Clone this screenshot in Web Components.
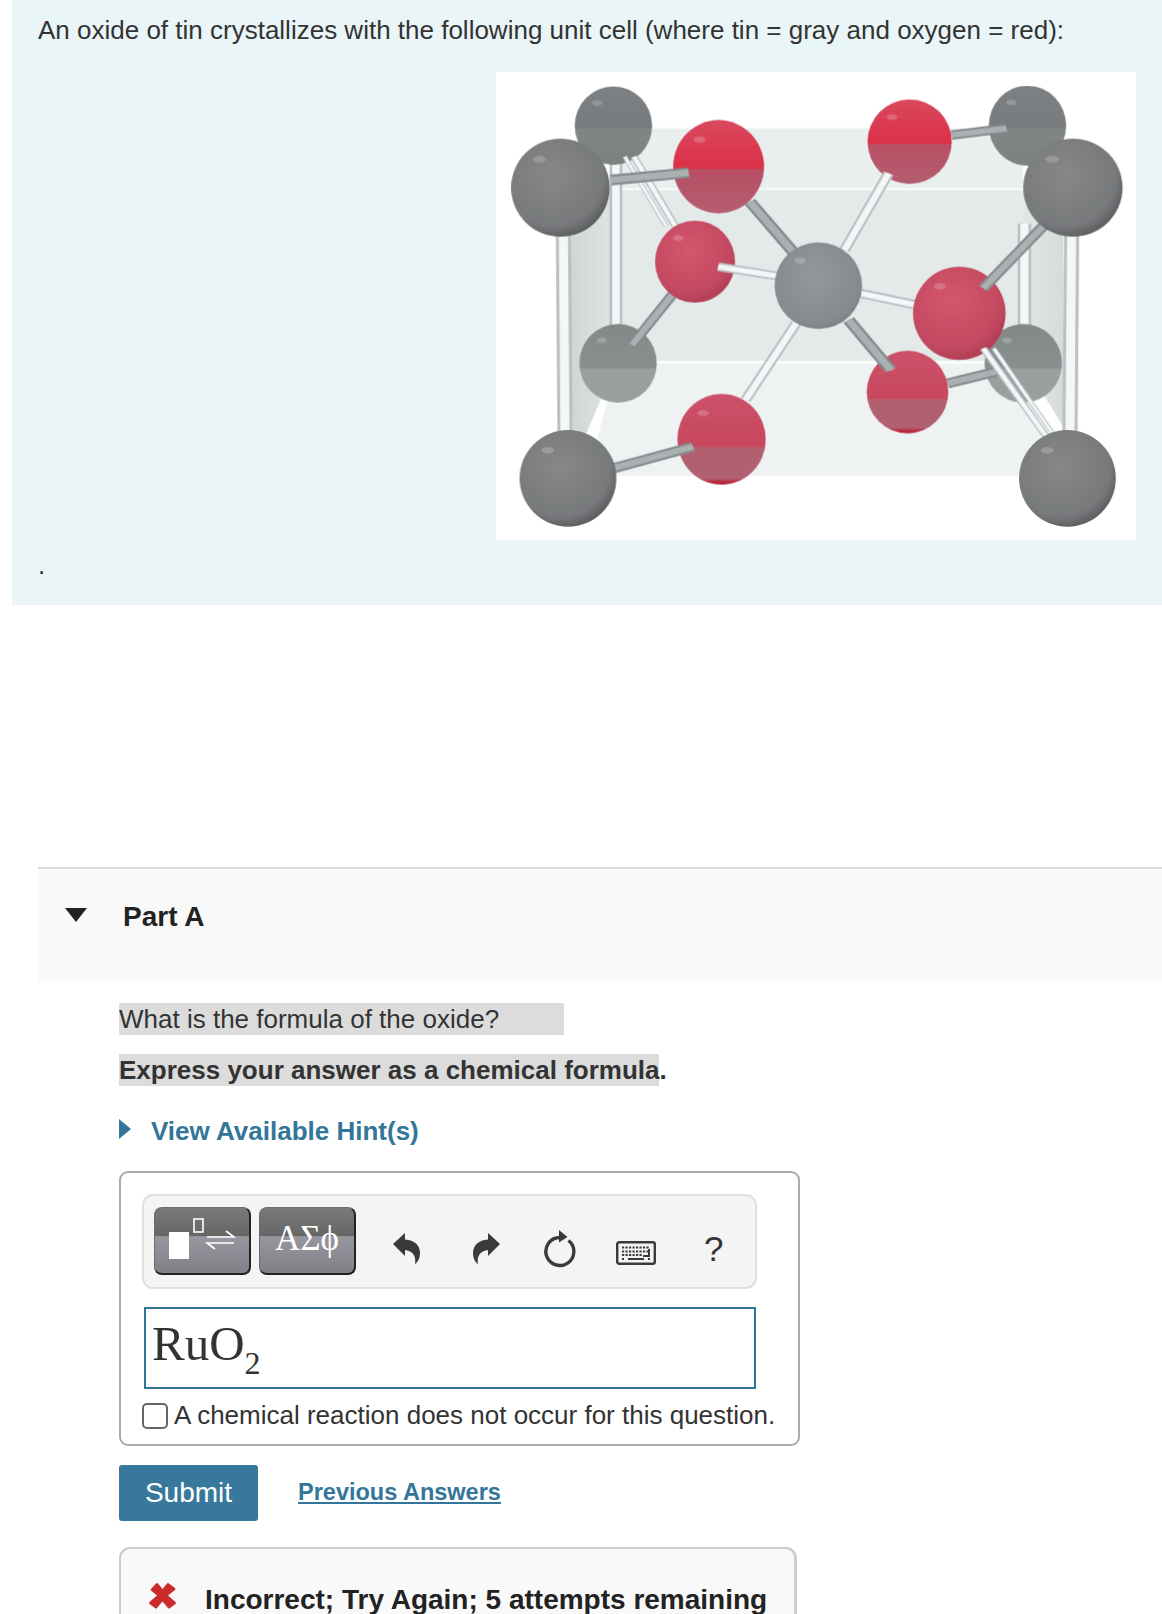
<!DOCTYPE html>
<html lang="en">
<head>
<meta charset="utf-8">
<title>Part A</title>
<style>
  html, body { margin: 0; height: 1614px; overflow: hidden; background: #fff; }
  body { font-family: "Liberation Sans", Arial, sans-serif; color: #333; font-size: 26px; }
</style>
</head>
<body>

<intro-panel>An oxide of tin crystallizes with the following unit cell (where tin = gray and oxygen = red):</intro-panel>
<part-section title="Part A">
  <question-text>What is the formula of the oxide?</question-text>
  <hint-toggle>View Available Hint(s)</hint-toggle>
  <answer-editor></answer-editor>
  <submit-row></submit-row>
  <feedback-box>Incorrect; Try Again; 5 attempts remaining</feedback-box>
</part-section>

<script>
/* ------------------------------------------------------------------ */
/*  Figure: drawn in the coordinates of the reference image            */
/* ------------------------------------------------------------------ */
class UnitCellFigure extends HTMLElement {
  connectedCallback() {
    const frontGray = [
      [165, 383, 117, 147], [1383, 383, 118, 147], [183, 1255, 115, 145], [1370, 1255, 115, 145]
    ];
    const ball = (a, fill) =>
      `<ellipse cx="${a[0]}" cy="${a[1]}" rx="${a[2]}" ry="${a[3]}" fill="url(#${fill})"/>` +
      `<ellipse cx="${a[0] - a[2] * .42}" cy="${a[1] - a[3] * .58}" rx="${a[2] * .13}" ry="${a[3] * .07}" fill="#fff" opacity=".2"/>`;
    const line = (x1, y1, x2, y2, w, c) =>
      `<line x1="${x1}" y1="${y1}" x2="${x2}" y2="${y2}" stroke="${c}" stroke-width="${w}"/>`;
    // each bar has a darker edge and a lighter core
    const pale = (x1, y1, x2, y2, w) =>
      line(x1, y1, x2, y2, w, '#b9c0c3') + line(x1, y1, x2, y2, w * .6, '#f4f6f7');
    const steel = (x1, y1, x2, y2, w) =>
      line(x1, y1, x2, y2, w, '#858b8d') + line(x1, y1, x2, y2, w * .6, '#abb1b3');

    this.attachShadow({ mode: 'open' }).innerHTML = `
      <style>:host { display: block; width: 640px; height: 468px; background: #fff; } svg { display: block; }</style>
      <svg width="640" height="468" viewBox="12 36 1521 1404" preserveAspectRatio="none">
        <defs>
          <radialGradient id="g" cx=".42" cy=".38" r=".72">
            <stop offset="0" stop-color="#868889"/><stop offset=".72" stop-color="#77797b"/><stop offset="1" stop-color="#4a4c4e"/>
          </radialGradient>
          <linearGradient id="gt" x1="0" y1="0" x2="0" y2="1">
            <stop offset="0" stop-color="#7d8183"/><stop offset=".53" stop-color="#787c7e"/>
            <stop offset=".54" stop-color="#828687"/><stop offset="1" stop-color="#7c8182"/>
          </linearGradient>
          <linearGradient id="gm" x1="0" y1="0" x2="0" y2="1">
            <stop offset="0" stop-color="#838889"/><stop offset=".56" stop-color="#8a8f90"/>
            <stop offset=".57" stop-color="#999e9e"/><stop offset="1" stop-color="#9a9f9f"/>
          </linearGradient>
          <radialGradient id="gc" cx=".45" cy=".4" r=".68">
            <stop offset="0" stop-color="#95999c"/><stop offset=".8" stop-color="#858a8d"/><stop offset="1" stop-color="#6f7578"/>
          </radialGradient>
          <radialGradient id="r" cx=".42" cy=".36" r=".72">
            <stop offset="0" stop-color="#d5566d"/><stop offset=".7" stop-color="#c44a61"/><stop offset="1" stop-color="#a83a50"/>
          </radialGradient>
          <linearGradient id="rt" x1="0" y1="0" x2="0" y2="1">
            <stop offset="0" stop-color="#d84a5e"/><stop offset=".52" stop-color="#dc3048"/>
            <stop offset=".53" stop-color="#b94f64"/><stop offset="1" stop-color="#b45e70"/>
          </linearGradient>
          <linearGradient id="rb" x1="0" y1="0" x2="0" y2="1">
            <stop offset="0" stop-color="#cc5269"/><stop offset=".58" stop-color="#c8485f"/>
            <stop offset=".59" stop-color="#b3616f"/><stop offset=".93" stop-color="#b0606f"/><stop offset=".97" stop-color="#b8283e"/>
          </linearGradient>
          <linearGradient id="wl" x1="0" y1="0" x2="1" y2="0">
            <stop offset="0" stop-color="#cfd6d4"/><stop offset="1" stop-color="#e2e7e6"/>
          </linearGradient>
          <linearGradient id="wr" x1="0" y1="0" x2="1" y2="0">
            <stop offset="0" stop-color="#e2e7e6"/><stop offset="1" stop-color="#d6dcda"/>
          </linearGradient>
          <filter id="soft" x="-5%" y="-5%" width="110%" height="110%"><feGaussianBlur stdDeviation="1.6 2"/></filter>
        </defs>
        <g filter="url(#soft)">
          <polygon points="300,205 1265,205 1265,385 300,385" fill="#e9eeee"/>
          <polygon points="300,390 1265,390 1265,903 300,903" fill="#e4e9e9"/>
          <polygon points="300,910 1265,910 1340,1247 230,1247" fill="#eef2f2"/>
          <polygon points="190,530 300,385 300,905 230,1110 190,1240" fill="url(#wl)"/>
          <polygon points="1265,385 1360,530 1360,1100 1265,905" fill="url(#wr)"/>
          ${pale(297, 300, 297, 820, 30)}
          ${pale(1268, 490, 1268, 820, 32)}
          ${ball([291, 197, 92, 118], 'gt')}
          ${ball([1275, 197, 92, 120], 'gt')}
          ${ball([302, 910, 92, 118], 'gm')}
          ${ball([1265, 910, 92, 118], 'gm')}
          ${pale(340, 290, 438, 498, 18)}
          ${pale(318, 290, 416, 498, 12)}
          ${steel(335, 855, 440, 690, 26)}
          ${steel(1085, 970, 1200, 935, 30)}
          ${steel(1095, 225, 1225, 205, 28)}
          ${ball([485, 605, 95, 123], 'r')}
          ${ball([990, 996, 97, 124], 'rb')}
          ${ball([541, 320, 108, 140], 'rt')}
          ${ball([995, 245, 100, 127], 'rt')}
          ${steel(615, 425, 735, 600, 30)}
          ${pale(945, 340, 840, 570, 26)}
          ${pale(540, 620, 690, 650, 26)}
          ${steel(850, 780, 950, 930, 30)}
          ${pale(725, 790, 605, 1020, 26)}
          ${pale(840, 690, 1010, 735, 28)}
          ${ball([778, 677, 104, 130], 'gc')}
          ${ball([1113, 760, 110, 140], 'r')}
          ${ball([548, 1138, 105, 136], 'rb')}
          ${steel(1170, 685, 1315, 495, 28)}
          ${pale(1170, 865, 1320, 1130, 18)}
          ${pale(1195, 865, 1340, 1130, 12)}
          ${steel(285, 360, 470, 338, 32)}
          ${pale(172, 510, 176, 1130, 36)}
          ${pale(1380, 510, 1376, 1130, 36)}
          ${steel(290, 1225, 480, 1160, 30)}
          ${frontGray.map(a => ball(a, 'g')).join('')}
        </g>
      </svg>`;
  }
}
customElements.define('unit-cell-figure', UnitCellFigure);

/* ------------------------------------------------------------------ */
/*  Page sections                                                      */
/* ------------------------------------------------------------------ */
class IntroPanel extends HTMLElement {
  constructor() {
    super();
    this.attachShadow({ mode: 'open' }).innerHTML = `
      <style>
        :host { display: block; margin-left: 12px; height: 605px; box-sizing: border-box; padding: 15px 26px 0 26px; background: #e9f5f7; }
        p { margin: 0; line-height: 30px; white-space: nowrap; }
        .figure { display: flex; justify-content: flex-end; margin: 27px 0 0; }
        .dot { margin-top: 10px; line-height: 30px; }
      </style>
      <p><slot></slot></p>
      <div class="figure"><unit-cell-figure></unit-cell-figure></div>
      <div class="dot">.</div>`;
  }
}
customElements.define('intro-panel', IntroPanel);

class PartSection extends HTMLElement {
  constructor() {
    super();
    this.attachShadow({ mode: 'open' }).innerHTML = `
      <style>
        :host { display: block; margin: 262px 0 0 38px; }
        header { display: flex; gap: 36px; height: 112px; padding: 0 0 0 27px; background: #f9f9f9; border-top: 2px solid #dedede; }
        svg { margin-top: 39px; flex: none; }
        h2 { margin: 32px 0 0; font-size: 28px; line-height: 32px; color: #222; }
        .body { padding: 22px 0 0 81px; }
      </style>
      <header>
        <svg width="22" height="14" viewBox="0 0 22 14"><path d="M0 0H22L11 14Z" fill="#222"/></svg>
        <h2></h2>
      </header>
      <div class="body"><slot></slot></div>`;
  }
  connectedCallback() {
    this.shadowRoot.querySelector('h2').textContent = this.getAttribute('title');
  }
}
customElements.define('part-section', PartSection);

class QuestionText extends HTMLElement {
  constructor() {
    super();
    this.attachShadow({ mode: 'open' }).innerHTML = `
      <style>
        :host { display: block; }
        div { line-height: 32px; background: #dcdcdc; white-space: nowrap; }
        .q { width: 445px; }
        .e { width: 540px; margin-top: 19px; font-weight: 700; }
      </style>
      <div class="q"><slot></slot></div>
      <div class="e">Express your answer as a chemical formula.</div>`;
  }
}
customElements.define('question-text', QuestionText);

class HintToggle extends HTMLElement {
  constructor() {
    super();
    this.attachShadow({ mode: 'open' }).innerHTML = `
      <style>
        :host { display: flex; align-items: flex-start; gap: 20px; margin-top: 29px; color: #33769a; font-weight: 700; }
        svg { margin-top: 4px; flex: none; }
        span { line-height: 32px; }
      </style>
      <svg width="12" height="20" viewBox="0 0 12 20"><path d="M0 0L12 10L0 20Z" fill="#33769a"/></svg>
      <span><slot></slot></span>`;
  }
}
customElements.define('hint-toggle', HintToggle);

/* ------------------------------------------------------------------ */
/*  Answer editor                                                      */
/* ------------------------------------------------------------------ */
class ToolButton extends HTMLElement {
  constructor() {
    super();
    this.attachShadow({ mode: 'open' }).innerHTML = `
      <style>
        :host {
          display: flex; align-items: center; justify-content: center; box-sizing: border-box;
          width: 97px; height: 68px; border-radius: 8px; overflow: hidden;
          border: 1px solid #6d6d6d; border-right: 2px solid #222; border-bottom: 2px solid #222;
          background: linear-gradient(#7a7a7a, #666 43%, #98969f 44%, #817f86);
          color: #fff; font: 35px/1 "Liberation Serif", "Times New Roman", serif;
        }
      </style>
      <slot></slot>`;
  }
}
customElements.define('tool-button', ToolButton);

class EditorToolbar extends HTMLElement {
  constructor() {
    super();
    this.attachShadow({ mode: 'open' }).innerHTML = `
      <style>
        :host {
          display: flex; align-items: center; box-sizing: border-box; width: 615px; height: 95px;
          padding: 0 0 0 10px; background: #f4f4f4; border: 2px solid #e0e0e0; border-radius: 11px;
        }
        .btns { display: flex; gap: 8px; margin-bottom: 2px; }
        svg { display: block; flex: none; }
        .undo { margin: 14px 0 0 37px; }
        .redo { margin: 14px 0 0 51px; }
        .reload { margin: 14px 0 0 43px; }
        .keys { margin: 22px 0 0 39px; }
        .help { margin: 14px 0 0 48px; font: 35px/1 "Liberation Sans", Arial, sans-serif; color: #333; }
      </style>
      <div class="btns">
        <tool-button>
          <svg width="84" height="48" viewBox="0 0 84 48">
            <rect x="9" y="16" width="20" height="27" fill="#fff"/>
            <rect x="34" y="3" width="9" height="13" fill="none" stroke="#fff" stroke-width="1.6"/>
            <path d="M47 21H74L66 15M74 27H47L55 33" fill="none" stroke="#fff" stroke-width="1.6"/>
          </svg>
        </tool-button>
        <tool-button><span style="margin-top:-4px">ΑΣϕ</span></tool-button>
      </div>
      <svg class="undo" width="28" height="33" viewBox="0 0 28 33"><path d="M0 12L12 1V7.5C22 8 27 14 27 21C27 26 25 30 22 32C23 27 22 19 12 18V24Z" fill="#3a3a3a"/></svg>
      <svg class="redo" width="28" height="33" viewBox="0 0 28 33"><path d="M28 12L16 1V7.5C6 8 1 14 1 21C1 26 3 30 6 32C5 27 6 19 16 18V24Z" fill="#3a3a3a"/></svg>
      <svg class="reload" width="34" height="38" viewBox="0 0 34 38">
        <path d="M25.5 10.5A14 14 0 1 1 17 7.5" fill="none" stroke="#3a3a3a" stroke-width="3.4"/>
        <path d="M16 0L24.5 7L16 12.5Z" fill="#3a3a3a"/>
      </svg>
      <svg class="keys" width="40" height="24" viewBox="0 0 40 24">
        <rect x="1.2" y="1.2" width="37.6" height="21.6" rx="2" fill="none" stroke="#3a3a3a" stroke-width="2.4"/>
        <path d="M6 6.5H34M6 10.5H34M6 14H27M6 18H8M32 18H34" fill="none" stroke="#3a3a3a" stroke-width="2" stroke-dasharray="2.2 1.3"/>
        <path d="M12 18H28M33 8V15H27" fill="none" stroke="#3a3a3a" stroke-width="2"/>
      </svg>
      <span class="help">?</span>`;
  }
}
customElements.define('editor-toolbar', EditorToolbar);

class AnswerEditor extends HTMLElement {
  constructor() {
    super();
    this.attachShadow({ mode: 'open' }).innerHTML = `
      <style>
        :host {
          display: block; box-sizing: border-box; width: 681px; height: 275px; margin-top: 24px;
          padding: 21px 0 0 21px; border: 2px solid #aaa; border-radius: 9px;
        }
        .input {
          box-sizing: border-box; width: 612px; height: 82px; margin: 18px 0 0 2px;
          padding: 5px 0 0 6px; border: 2px solid #33769a;
          font: 49px/60px "Liberation Serif", "Times New Roman", serif; color: #333;
        }
        sub { font-size: 32px; line-height: 0; vertical-align: -14px; }
        label { display: flex; align-items: center; gap: 6px; margin-top: 14px; line-height: 26px; white-space: nowrap; }
        .box { flex: none; width: 26px; height: 26px; box-sizing: border-box; border: 2px solid #666; border-radius: 5px; background: #fff; }
        .text { margin-top: -3px; }
      </style>
      <editor-toolbar></editor-toolbar>
      <div class="input">RuO<sub>2</sub></div>
      <label><span class="box"></span><span class="text">A chemical reaction does not occur for this question.</span></label>`;
  }
}
customElements.define('answer-editor', AnswerEditor);

class SubmitRow extends HTMLElement {
  constructor() {
    super();
    this.attachShadow({ mode: 'open' }).innerHTML = `
      <style>
        :host { display: flex; align-items: center; gap: 40px; margin-top: 19px; }
        .submit { width: 139px; height: 56px; display: flex; align-items: center; justify-content: center; background: #37789c; border-radius: 3px; color: #fff; font-size: 28px; }
        a { color: #33769a; font-weight: 700; font-size: 23.5px; text-decoration: underline; margin-top: -2px; }
      </style>
      <div class="submit">Submit</div>
      <a>Previous Answers</a>`;
  }
}
customElements.define('submit-row', SubmitRow);

class FeedbackBox extends HTMLElement {
  constructor() {
    super();
    this.attachShadow({ mode: 'open' }).innerHTML = `
      <style>
        :host {
          display: flex; align-items: flex-start; gap: 28px; box-sizing: border-box; width: 678px; height: 130px; margin-top: 26px;
          padding: 34px 0 0 27px; background: #f9f9f9; border: 2px solid #ccc; border-right-width: 3px; border-radius: 11px;
          font-size: 28px; font-weight: 700; color: #222;
        }
        svg { flex: none; margin-top: -1px; }
        span { line-height: 34px; white-space: nowrap; }
      </style>
      <svg width="29" height="27" viewBox="0 0 29 27"><path d="M3 7L8 1.5Q9 .5 10 1.5L14.5 7 19 1.5Q20 .5 21 1.5L27 6Q28 7 27 8L20 13.5 27.5 20Q28.5 21 27.5 22L22 26Q21 27 20 26L14.5 19.5 9 26Q8 27 7 26L1.5 22Q.5 21 1.5 20L9 13.5 3 8.5Q2 7.5 3 7Z" fill="#cc2b2b"/></svg>
      <span><slot></slot></span>`;
  }
}
customElements.define('feedback-box', FeedbackBox);
</script>
</body>
</html>
